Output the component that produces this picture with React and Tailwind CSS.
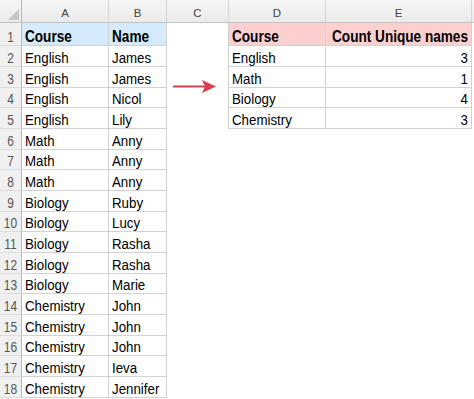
import React from "react";

const left = [
  ["English", "James"],
  ["English", "James"],
  ["English", "Nicol"],
  ["English", "Lily"],
  ["Math", "Anny"],
  ["Math", "Anny"],
  ["Math", "Anny"],
  ["Biology", "Ruby"],
  ["Biology", "Lucy"],
  ["Biology", "Rasha"],
  ["Biology", "Rasha"],
  ["Biology", "Marie"],
  ["Chemistry", "John"],
  ["Chemistry", "John"],
  ["Chemistry", "John"],
  ["Chemistry", "Ieva"],
  ["Chemistry", "Jennifer"],
];

const right = [
  ["English", 3],
  ["Math", 1],
  ["Biology", 4],
  ["Chemistry", 3],
];

const heights = ["h-[21px]", "h-[21px]", "h-[20px]"];

const font = { fontFamily: '"Liberation Sans", Arial, sans-serif' };

function T({ children }) {
  return <span className="inline-block leading-[14px] origin-bottom scale-y-[1.15]">{children}</span>;
}

function RowNum({ n, h }) {
  return (
    <div
      className={`w-[22px] shrink-0 ${h} flex items-end justify-center bg-[#f0f0f0] border-r border-r-[#b9b9b9] border-b border-b-[#dcdcdc] text-[12px] text-[#555]`}
    >
      <T>{n}</T>
    </div>
  );
}

export default function App() {
  return (
    <div className="relative w-[474px] h-[399px] bg-white overflow-hidden text-black" style={font}>
      {/* Column header row */}
      <div className="flex h-[23px] bg-gradient-to-b from-[#f5f5f5] to-[#ebebeb] border-b border-b-[#c4c4c4] text-[11.5px] text-[#444]">
        <div className="w-[22px] shrink-0 border-r border-r-[#b9b9b9] relative">
          <svg className="absolute left-[8px] top-[9px]" width="11" height="11" viewBox="0 0 11 11">
            <polygon points="11,0 11,11 0,11" fill="#c6c6c6" />
          </svg>
        </div>
        <div className="w-[87px] shrink-0 border-r border-r-[#d6d6d6] flex items-center justify-center pt-[5px]">A</div>
        <div className="w-[58px] shrink-0 border-r border-r-[#d6d6d6] flex items-center justify-center pt-[5px]">B</div>
        <div className="w-[62px] shrink-0 border-r border-r-[#d6d6d6] flex items-center justify-center pt-[5px]">C</div>
        <div className="w-[97px] shrink-0 border-r border-r-[#d6d6d6] flex items-center justify-center pt-[5px]">D</div>
        <div className="w-[146px] shrink-0 border-r border-r-[#d6d6d6] flex items-center justify-center pt-[5px]">E</div>
        <div className="flex-1" />
      </div>

      {/* Row 1: headers */}
      <div className="flex h-[23px]">
        <RowNum n={1} h="h-[23px]" />
        <div className="w-[87px] shrink-0 bg-[#d5eafa] border-r border-b border-[#d2d2d2] flex items-end pl-[3px] text-[13.6px] font-bold">
          <T>Course</T>
        </div>
        <div className="w-[58px] shrink-0 bg-[#d5eafa] border-r border-b border-[#d2d2d2] flex items-end pl-[3px] text-[13.6px] font-bold">
          <T>Name</T>
        </div>
        <div className="w-[62px] shrink-0 border-r border-r-[#d2d2d2]" />
        <div className="w-[97px] shrink-0 bg-[#fdd0d0] border-r border-b border-[#d2d2d2] flex items-end pl-[3px] text-[13.6px] font-bold">
          <T>Course</T>
        </div>
        <div className="w-[146px] shrink-0 bg-[#fdd0d0] border-r border-b border-[#d2d2d2] flex items-end justify-end pr-[3px] text-[13.6px] font-bold">
          <T>Count Unique names</T>
        </div>
        <div className="flex-1" />
      </div>

      {/* Rows 2-18 */}
      {left.map((r, i) => {
        const h = heights[i % 3];
        const rt = right[i];
        return (
          <div key={i} className={`flex ${h}`}>
            <RowNum n={i + 2} h={h} />
            <div className="w-[87px] shrink-0 border-r border-b border-[#d2d2d2] flex items-end pl-[3px] text-[13.3px]">
              <T>{r[0]}</T>
            </div>
            <div className="w-[58px] shrink-0 border-r border-b border-[#d2d2d2] flex items-end pl-[3px] text-[13.3px]">
              <T>{r[1]}</T>
            </div>
            {rt ? (
              <>
                <div className="w-[62px] shrink-0 border-r border-r-[#d2d2d2]" />
                <div className="w-[97px] shrink-0 border-r border-b border-[#d2d2d2] flex items-end pl-[3px] text-[13.3px]">
                  <T>{rt[0]}</T>
                </div>
                <div className="w-[146px] shrink-0 border-r border-b border-[#d2d2d2] flex items-end justify-end pr-[3px] text-[13.3px]">
                  <T>{rt[1]}</T>
                </div>
              </>
            ) : null}
            <div className="flex-1" />
          </div>
        );
      })}

      {/* Arrow */}
      <svg className="absolute left-[173px] top-[79px]" width="44" height="16" viewBox="0 0 44 16">
        <line x1="0" y1="7.5" x2="32" y2="7.5" stroke="#d6404a" strokeWidth="2" />
        <polygon points="29,1 43,7.5 29,14 32,7.5" fill="#d6404a" />
      </svg>
    </div>
  );
}
